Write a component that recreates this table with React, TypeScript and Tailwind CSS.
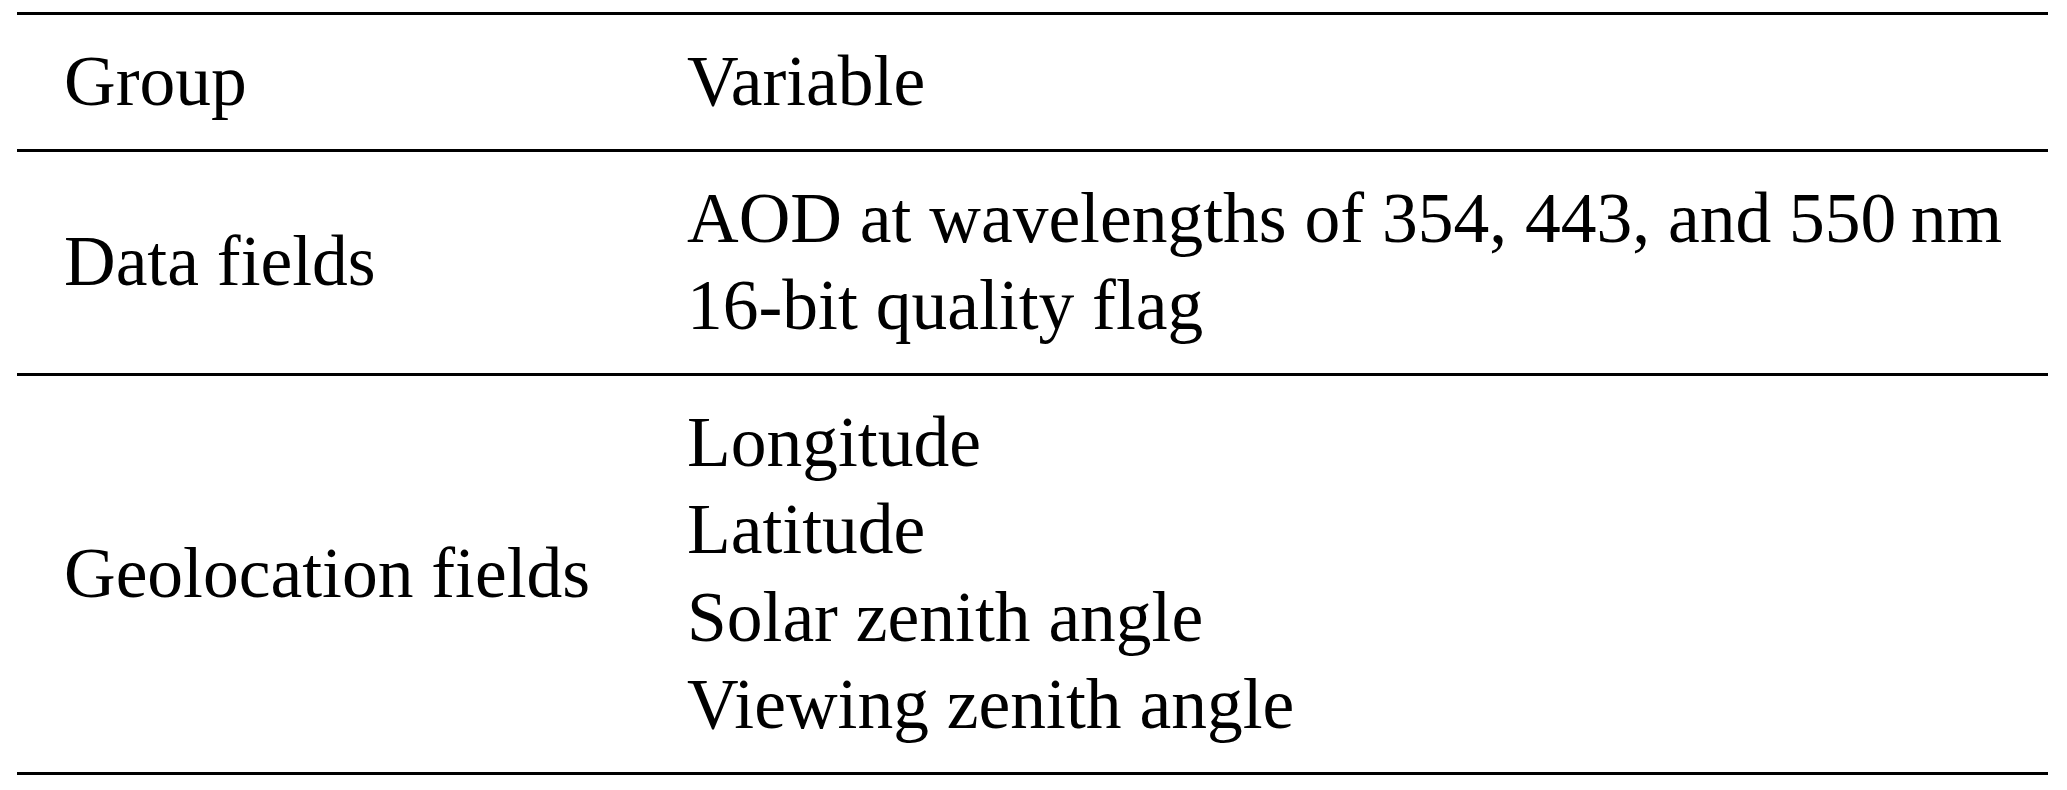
const rows = [
  { group: 'Data fields', vars: ['AOD at wavelengths of 354, 443, and 550\u2009nm', '16-bit quality flag'] },
  {
    group: 'Geolocation fields',
    vars: ['Longitude', 'Latitude', 'Solar zenith angle', 'Viewing zenith angle'],
  },
];

export default function App() {
  return (
    <div className="w-[2067px] h-[790px] bg-white text-black overflow-hidden" style={{ fontFamily: '"Liberation Serif", "Times New Roman", serif' }}>
      <div className="ml-[17px] mt-[12px] w-[2031px] text-[71.5px] leading-[87.5px]">
        {/* Header */}
        <div className="grid grid-cols-[670px_1fr] border-t-[3px] border-b-[3px] border-black pt-[22px] pb-[24px]">
          <div className="pl-[47px]">Group</div>
          <div>Variable</div>
        </div>

        {rows.map((row) => (
          <div key={row.group} className="grid grid-cols-[670px_1fr] border-b-[3px] border-black pt-[22px] pb-[24px]">
            <div className="pl-[47px] flex items-center">{row.group}</div>
            <div className="flex flex-col">
              {row.vars.map((v) => (
                <div key={v} className="whitespace-nowrap">{v}</div>
              ))}
            </div>
          </div>
        ))}
      </div>
    </div>
  );
}
